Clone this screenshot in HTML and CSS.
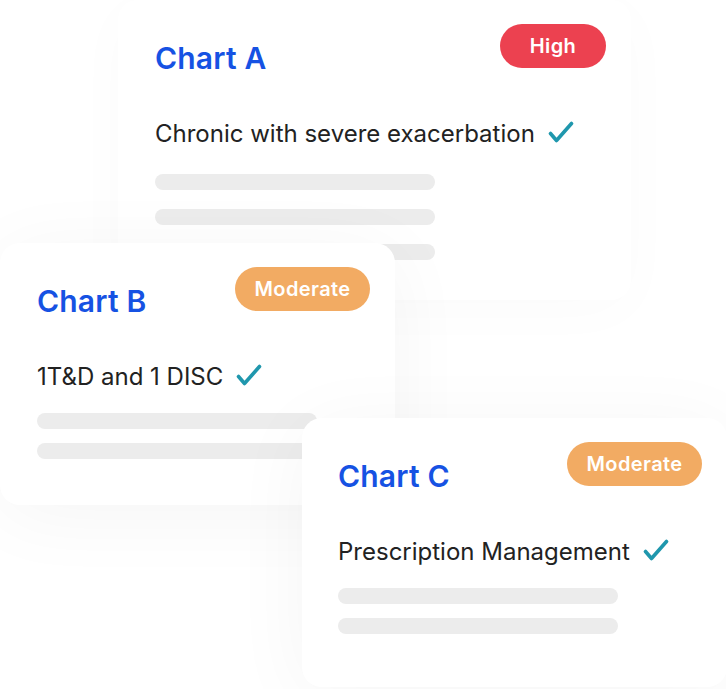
FILE: index.html
```html
<!DOCTYPE html>
<html lang="en">
<head>
<meta charset="utf-8">
<title>Charts</title>
<link rel="stylesheet" href="styles.css">
</head>
<body>
<div class="canvas">
  <section class="card card-a">
    <div class="head">
      <h2 class="title">Chart A</h2>
      <span class="badge high">High</span>
    </div>
    <p class="item">Chronic with severe exacerbation
      <svg class="check" viewBox="0 0 26 22" width="26" height="22"><polyline points="2.5,12.5 8.5,19.5 23.5,2.5" fill="none" stroke="#1f97ad" stroke-width="3.6" stroke-linecap="round" stroke-linejoin="round"/></svg>
    </p>
    <div class="bars">
      <div class="bar"></div>
      <div class="bar"></div>
      <div class="bar"></div>
    </div>
  </section>
  <section class="card card-b">
    <div class="head">
      <h2 class="title">Chart B</h2>
      <span class="badge moderate">Moderate</span>
    </div>
    <p class="item">1T&amp;D and 1 DISC
      <svg class="check" viewBox="0 0 26 22" width="26" height="22"><polyline points="2.5,12.5 8.5,19.5 23.5,2.5" fill="none" stroke="#1f97ad" stroke-width="3.6" stroke-linecap="round" stroke-linejoin="round"/></svg>
    </p>
    <div class="bars">
      <div class="bar"></div>
      <div class="bar"></div>
    </div>
  </section>
  <section class="card card-c">
    <div class="head">
      <h2 class="title">Chart C</h2>
      <span class="badge moderate">Moderate</span>
    </div>
    <p class="item">Prescription Management
      <svg class="check" viewBox="0 0 26 22" width="26" height="22"><polyline points="2.5,12.5 8.5,19.5 23.5,2.5" fill="none" stroke="#1f97ad" stroke-width="3.6" stroke-linecap="round" stroke-linejoin="round"/></svg>
    </p>
    <div class="bars">
      <div class="bar"></div>
      <div class="bar"></div>
    </div>
  </section>
</div>
</body>
</html>
```
FILE: styles.css
```css
html, body {
  margin: 0;
  padding: 0;
  background: #ffffff;
}
body {
  font-family: Inter, "Noto Sans", "Liberation Sans", sans-serif;
  width: 726px;
  height: 689px;
  overflow: hidden;
}
.canvas {
  position: relative;
  width: 726px;
  height: 689px;
}
.card {
  position: absolute;
  box-sizing: border-box;
  background: #ffffff;
  border-radius: 20px;
  padding: 24px 25px 24px 37px;
  box-shadow: 0 10px 80px rgba(0, 0, 0, 0.045);
}
.card-a {
  left: 118px;
  top: 0;
  width: 513px;
  height: 300px;
  z-index: 1;
  box-shadow: 0 10px 60px rgba(0, 0, 0, 0.02);
}
.card-b {
  left: 0;
  top: 243px;
  width: 395px;
  height: 262px;
  z-index: 2;
}
.card-c {
  left: 302px;
  top: 418px;
  width: 425px;
  height: 269px;
  padding-left: 36px;
  z-index: 3;
}
.head {
  display: flex;
  justify-content: space-between;
  align-items: flex-start;
}
.title {
  margin: 17px 0 0;
  font-size: 30px;
  line-height: 34px;
  font-weight: 600;
  color: #1652e3;
  letter-spacing: 0.2px;
}
.badge {
  display: flex;
  align-items: center;
  justify-content: center;
  height: 44px;
  border-radius: 22px;
  color: #ffffff;
  font-size: 20px;
  font-weight: 600;
  letter-spacing: 0.4px;
  box-sizing: border-box;
}
.high {
  width: 106px;
  background: #ec4150;
}
.moderate {
  width: 135px;
  background: #f2ab63;
}
.item {
  display: flex;
  align-items: center;
  gap: 13px;
  margin: 44px 0 0;
  font-size: 24px;
  line-height: 30px;
  color: #222222;
}
.check {
  flex: none;
  margin-top: -4px;
}
.bars {
  display: flex;
  flex-direction: column;
  gap: 14px;
  margin-top: 21px;
}
.card-a .bars {
  gap: 19px;
  margin-top: 25px;
}
.bar {
  width: 280px;
  height: 16px;
  border-radius: 8px;
  background: #ececec;
}
```
